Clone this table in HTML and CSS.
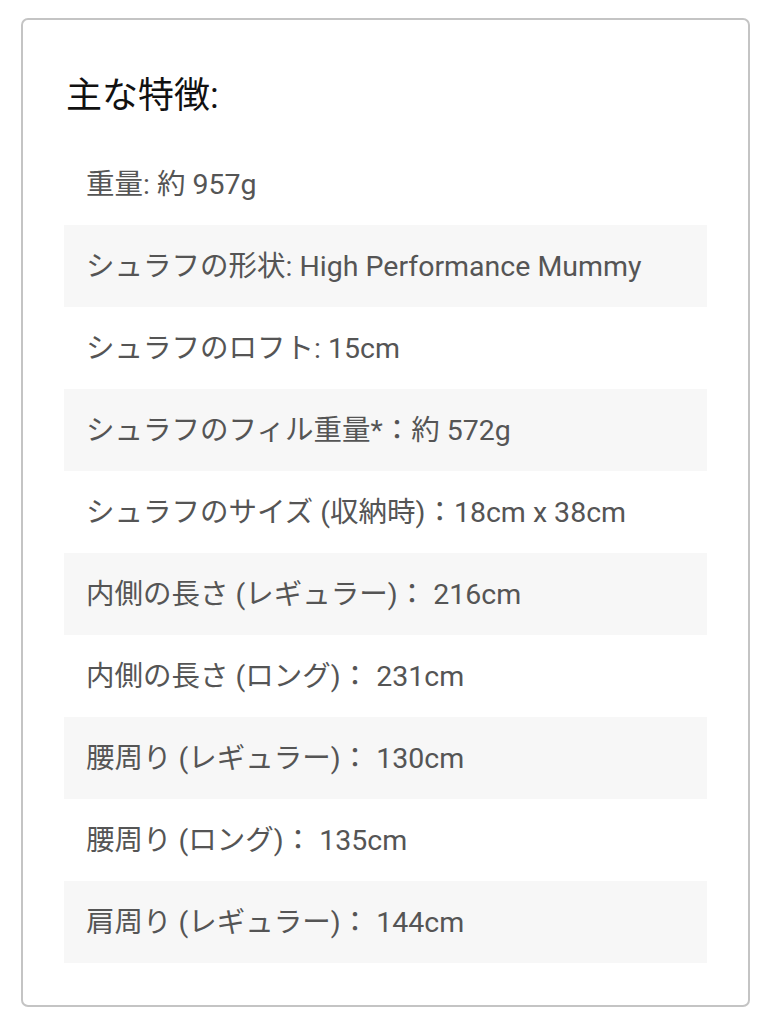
FILE: index.html
```html
<!DOCTYPE html>
<html lang="ja">
<head>
<meta charset="utf-8">
<link rel="stylesheet" href="styles.css">
</head>
<body>
<div class="card">
  <h2 class="title">主な特徴:</h2>
  <ul class="list">
    <li class="row">重量: 約 957g</li>
    <li class="row alt">シュラフの形状: High Performance Mummy</li>
    <li class="row">シュラフのロフト: 15cm</li>
    <li class="row alt">シュラフのフィル重量*：約 572g</li>
    <li class="row">シュラフのサイズ (収納時)：18cm x 38cm</li>
    <li class="row alt">内側の長さ (レギュラー)： 216cm</li>
    <li class="row">内側の長さ (ロング)： 231cm</li>
    <li class="row alt">腰周り (レギュラー)： 130cm</li>
    <li class="row">腰周り (ロング)： 135cm</li>
    <li class="row alt">肩周り (レギュラー)： 144cm</li>
  </ul>
</div>
</body>
</html>
```
FILE: styles.css
```css
html, body {
  margin: 0;
  padding: 0;
  background: #fff;
}
body {
  font-family: Roboto, "Noto Sans CJK JP", sans-serif;
}
.card {
  margin: 18px 22px 0 21px;
  border: 2px solid #c4c4c4;
  border-radius: 7px;
  padding: 54px 41px 40px 41px;
  height: 989px;
  box-sizing: border-box;
}
.title {
  margin: 0 0 0 2px;
  font-size: 36px;
  font-weight: 400;
  color: #111;
  line-height: 44px;
  height: 69px;
}
.list {
  list-style: none;
  margin: 0;
  padding: 0;
}
.row {
  height: 82px;
  box-sizing: border-box;
  display: flex;
  align-items: center;
  padding: 0 0 6px 22px;
  font-size: 28.5px;
  color: #555;
}
.alt {
  background: #f7f7f7;
}
```
